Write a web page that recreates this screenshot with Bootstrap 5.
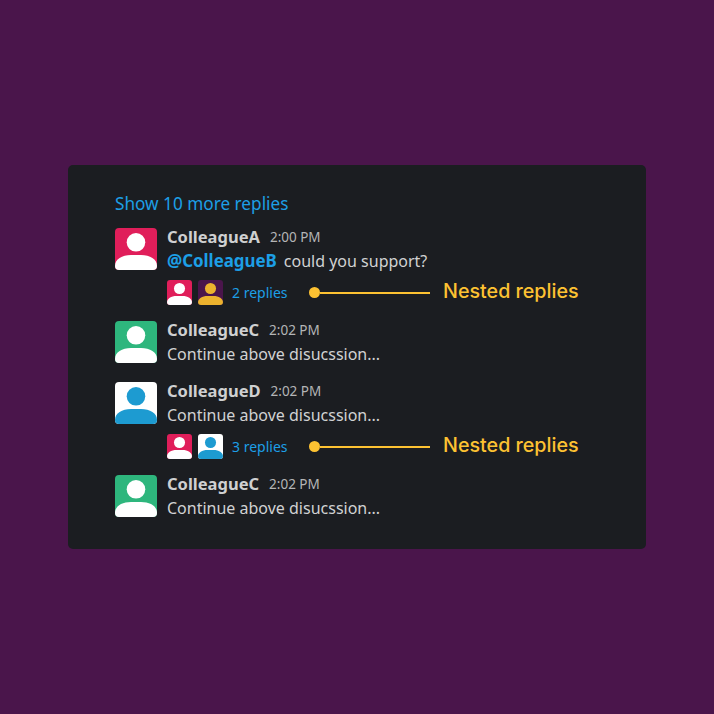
<!DOCTYPE html>
<html>
<head>
  <meta charset="utf-8">
  <title>Nested replies</title>
  <link rel="stylesheet" href="https://cdn.jsdelivr.net/npm/bootstrap@5.3.0/dist/css/bootstrap.min.css">
  <style>
    body { background: #4a154b; font-family: "Noto Sans", sans-serif; }
    .stage { height: 714px; }
    .thread-card { width: 578px; height: 384px; background: #1b1d21; border-radius: 5px; padding: 27px 47px 0; }
    .more-link { color: #1d9fe6; font-size: 17.2px; line-height: 24px; margin-bottom: 12px; }
    .msg { gap: 10px; height: 42px; }
    .msg + .msg { margin-top: 19px; }
    .msg-body { margin-top: -1px; }
    .ava { display: block; width: 42px; height: 42px; border-radius: 4px; flex: none; }
    .ava-sm { display: block; width: 25px; height: 25px; border-radius: 3px; flex: none; }
    .who { color: #cfd0d1; font-size: 16.5px; font-weight: 700; line-height: 20px; }
    .when { color: #b4b5b6; font-size: 13.5px; line-height: 20px; margin-left: 10px; }
    .msg-text { color: #d1d2d3; font-size: 16px; line-height: 24px; margin-top: 2px; }
    .mention { color: #1d9fe6; font-weight: 700; font-size: 16.9px; margin-right: 7px; }
    .replies { margin-top: 10px; height: 25px; }
    .replies + .msg { margin-top: 16px; }
    .reply-indent { width: 52px; flex: none; }
    .reply-faces { gap: 6px; }
    .reply-count { color: #1d9fe6; font-size: 14px; margin-left: 9px; width: 60px; white-space: nowrap; }
    .dot { width: 11px; height: 11px; border-radius: 50%; background: #fdc232; flex: none; margin-left: 17px; }
    .leader { width: 110px; height: 2px; background: #fdc232; flex: none; }
    .note { color: #fdc232; font-family: Inter, sans-serif; font-size: 19.7px; font-weight: 500; margin-left: 13px; margin-bottom: 2px; white-space: nowrap; }
  </style>
</head>
<body>
<svg width="0" height="0" class="d-block">
  <defs>
    <symbol id="person" viewBox="0 0 42 42">
      <circle cx="21" cy="14.300" r="9.300"/>
      <path d="M0 42v-4c0-7 7-11 16-11h10c9 0 16 4 16 11v4z"/>
    </symbol>
  </defs>
</svg>
<div class="stage d-flex align-items-center justify-content-center">
  <div class="thread-card">
    <div class="more-link">Show 10 more replies</div>

    <div class="msg d-flex">
      <svg class="ava" style="background:#e01e5a;fill:#fff"><use href="#person"/></svg>
      <div class="msg-body">
        <div class="d-flex align-items-center"><span class="who">ColleagueA</span><span class="when">2:00 PM</span></div>
        <div class="msg-text"><span class="mention">@ColleagueB</span>could you support?</div>
      </div>
    </div>
    <div class="replies d-flex align-items-center">
      <div class="reply-indent"></div>
      <div class="reply-faces d-flex">
        <svg class="ava-sm" style="background:#e01e5a;fill:#fff"><use href="#person"/></svg>
        <svg class="ava-sm" style="background:#4a154b;fill:#ecb22e"><use href="#person"/></svg>
      </div>
      <span class="reply-count">2 replies</span>
      <span class="dot"></span><span class="leader"></span>
      <span class="note">Nested replies</span>
    </div>

    <div class="msg d-flex">
      <svg class="ava" style="background:#2eb67d;fill:#fff"><use href="#person"/></svg>
      <div class="msg-body">
        <div class="d-flex align-items-center"><span class="who">ColleagueC</span><span class="when">2:02 PM</span></div>
        <div class="msg-text">Continue above disucssion...</div>
      </div>
    </div>

    <div class="msg d-flex">
      <svg class="ava" style="background:#fff;fill:#1d9bd1"><use href="#person"/></svg>
      <div class="msg-body">
        <div class="d-flex align-items-center"><span class="who">ColleagueD</span><span class="when">2:02 PM</span></div>
        <div class="msg-text">Continue above disucssion...</div>
      </div>
    </div>
    <div class="replies d-flex align-items-center">
      <div class="reply-indent"></div>
      <div class="reply-faces d-flex">
        <svg class="ava-sm" style="background:#e01e5a;fill:#fff"><use href="#person"/></svg>
        <svg class="ava-sm" style="background:#fff;fill:#1d9bd1"><use href="#person"/></svg>
      </div>
      <span class="reply-count">3 replies</span>
      <span class="dot"></span><span class="leader"></span>
      <span class="note">Nested replies</span>
    </div>

    <div class="msg d-flex">
      <svg class="ava" style="background:#2eb67d;fill:#fff"><use href="#person"/></svg>
      <div class="msg-body">
        <div class="d-flex align-items-center"><span class="who">ColleagueC</span><span class="when">2:02 PM</span></div>
        <div class="msg-text">Continue above disucssion...</div>
      </div>
    </div>
  </div>
</div>
<script src="https://cdn.jsdelivr.net/npm/bootstrap@5.3.0/dist/js/bootstrap.bundle.min.js"></script>
</body>
</html>
